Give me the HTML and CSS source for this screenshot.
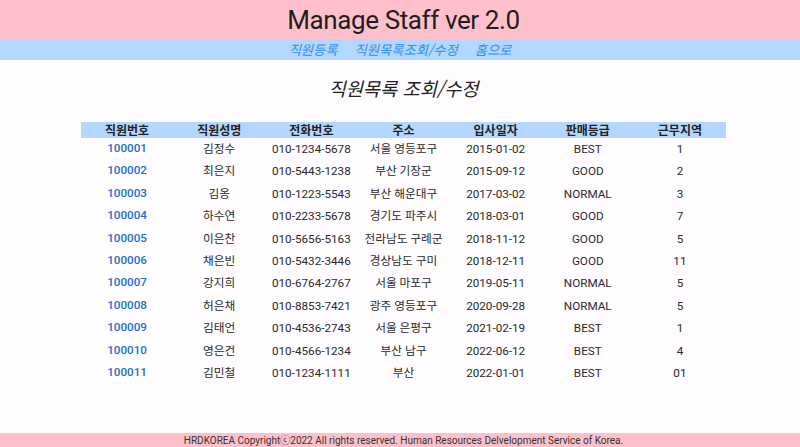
FILE: index.html
```html
<!DOCTYPE html>
<html lang="ko">
<head>
<meta charset="utf-8">
<title>Manage Staff ver 2.0</title>
<link rel="stylesheet" href="styles.css">
</head>
<body>
<div class="page">
  <header class="top">
    <h1 class="brand">Manage Staff ver 2.0</h1>
  </header>
  <nav class="menu">
    <a href="#" class="menu-link">직원등록</a>
    <a href="#" class="menu-link">직원목록조회/수정</a>
    <a href="#" class="menu-link">홈으로</a>
  </nav>
  <main class="content">
    <h2 class="title">직원목록 조회/수정</h2>
    <table class="staff">
      <thead>
        <tr><th>직원번호</th><th>직원성명</th><th>전화번호</th><th>주소</th><th>입사일자</th><th>판매등급</th><th>근무지역</th></tr>
      </thead>
      <tbody>
        <tr><td><a href="#" class="id">100001</a></td><td>김정수</td><td>010-1234-5678</td><td>서울 영등포구</td><td>2015-01-02</td><td>BEST</td><td>1</td></tr>
        <tr><td><a href="#" class="id">100002</a></td><td>최은지</td><td>010-5443-1238</td><td>부산 기장군</td><td>2015-09-12</td><td>GOOD</td><td>2</td></tr>
        <tr><td><a href="#" class="id">100003</a></td><td>김옹</td><td>010-1223-5543</td><td>부산 해운대구</td><td>2017-03-02</td><td>NORMAL</td><td>3</td></tr>
        <tr><td><a href="#" class="id">100004</a></td><td>하수연</td><td>010-2233-5678</td><td>경기도 파주시</td><td>2018-03-01</td><td>GOOD</td><td>7</td></tr>
        <tr><td><a href="#" class="id">100005</a></td><td>이은찬</td><td>010-5656-5163</td><td>전라남도 구례군</td><td>2018-11-12</td><td>GOOD</td><td>5</td></tr>
        <tr><td><a href="#" class="id">100006</a></td><td>채은빈</td><td>010-5432-3446</td><td>경상남도 구미</td><td>2018-12-11</td><td>GOOD</td><td>11</td></tr>
        <tr><td><a href="#" class="id">100007</a></td><td>강지희</td><td>010-6764-2767</td><td>서울 마포구</td><td>2019-05-11</td><td>NORMAL</td><td>5</td></tr>
        <tr><td><a href="#" class="id">100008</a></td><td>허은채</td><td>010-8853-7421</td><td>광주 영등포구</td><td>2020-09-28</td><td>NORMAL</td><td>5</td></tr>
        <tr><td><a href="#" class="id">100009</a></td><td>김태언</td><td>010-4536-2743</td><td>서울 은평구</td><td>2021-02-19</td><td>BEST</td><td>1</td></tr>
        <tr><td><a href="#" class="id">100010</a></td><td>영은건</td><td>010-4566-1234</td><td>부산 남구</td><td>2022-06-12</td><td>BEST</td><td>4</td></tr>
        <tr><td><a href="#" class="id">100011</a></td><td>김민철</td><td>010-1234-1111</td><td>부산</td><td>2022-01-01</td><td>BEST</td><td>01</td></tr>
      </tbody>
    </table>
  </main>
  <footer class="foot">HRDKOREA Copyrightⓒ2022 All rights reserved. Human Resources Delvelopment Service of Korea.</footer>
</div>
</body>
</html>
```
FILE: styles.css
```css
html, body {
  margin: 0;
  padding: 0;
}
body {
  font-family: Roboto, "Noto Sans CJK KR", sans-serif;
  background: #fefcff;
  color: #222;
}
.page {
  height: 447px;
  display: flex;
  flex-direction: column;
  overflow: hidden;
}
.top {
  background: #ffc0cb;
  height: 39px;
  display: flex;
  align-items: center;
  justify-content: center;
  padding-left: 7px;
}
.brand {
  margin: 0;
  font-size: 26px;
  font-weight: 400;
  letter-spacing: -0.4px;
  line-height: 36px;
  color: #1e1e1e;
}
.menu {
  background: #b3d7ff;
  height: 21px;
  display: flex;
  align-items: center;
  justify-content: center;
  gap: 17px;
}
.menu-link {
  font-family: "Noto Sans CJK KR", sans-serif;
  font-size: 13.3px;
  font-style: italic;
  line-height: 21px;
  color: #2b8ef2;
  text-decoration: none;
}
.content {
  flex: 1;
  display: flex;
  flex-direction: column;
  align-items: center;
  padding-left: 7px;
}
.title {
  margin: 14px 0 20px;
  font-family: "Noto Sans CJK KR", sans-serif;
  font-size: 18.7px;
  font-style: italic;
  font-weight: 400;
  line-height: 28px;
  color: #222;
}
.staff {
  width: 645px;
  table-layout: fixed;
  border-collapse: collapse;
}
.staff th {
  background: #b3d7ff;
  height: 16px;
  padding: 0;
  font-family: "Noto Sans CJK KR", sans-serif;
  font-size: 12px;
  font-weight: 700;
  line-height: 16px;
  color: #222;
}
.staff td {
  height: 22.4px;
  padding: 0;
  font-size: 11.7px;
  line-height: 22.4px;
  text-align: center;
  color: #2a2a2a;
}
.id {
  font-size: 11.7px;
  font-weight: 500;
  color: #1a6fcc;
  text-decoration: none;
  position: relative;
  top: -1px;
}
.foot {
  background: #ffc0cb;
  height: 14px;
  padding-left: 7px;
  font-size: 10px;
  line-height: 16px;
  text-align: center;
  color: #333;
}
```
